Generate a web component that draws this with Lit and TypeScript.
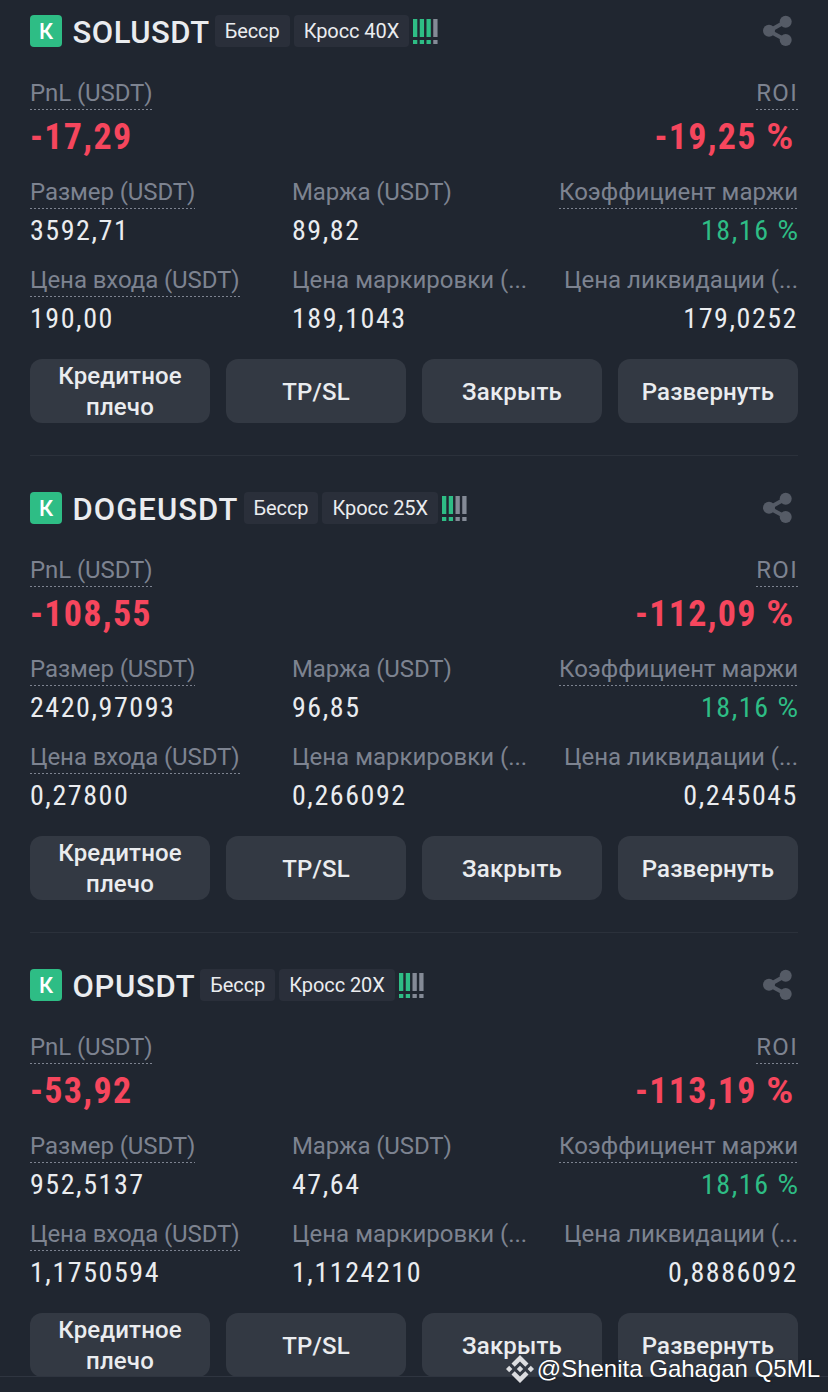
import { LitElement, html, css, svg } from "lit";
import { customElement, property } from "lit/decorators.js";
import { styleMap } from "lit/directives/style-map.js";

interface Position {
  symbol: string;
  tracking: number;
  leverage: string;
  risk: number;
  pnl: string;
  roi: string;
  size: string;
  margin: string;
  ratio: string;
  entry: string;
  mark: string;
  liquidation: string;
}

const POSITIONS: Position[] = [
  { symbol: "SOLUSDT", tracking: 0.5, leverage: "40X", risk: 3, pnl: "-17,29", roi: "-19,25 %", size: "3592,71", margin: "89,82", ratio: "18,16 %", entry: "190,00", mark: "189,1043", liquidation: "179,0252" },
  { symbol: "DOGEUSDT", tracking: 1.04, leverage: "25X", risk: 2, pnl: "-108,55", roi: "-112,09 %", size: "2420,97093", margin: "96,85", ratio: "18,16 %", entry: "0,27800", mark: "0,266092", liquidation: "0,245045" },
  { symbol: "OPUSDT", tracking: 0.69, leverage: "20X", risk: 2, pnl: "-53,92", roi: "-113,19 %", size: "952,5137", margin: "47,64", ratio: "18,16 %", entry: "1,1750594", mark: "1,1124210", liquidation: "0,8886092" },
];

const ACTIONS = ["Кредитное плечо", "TP/SL", "Закрыть", "Развернуть"];

@customElement("position-card")
export class PositionCard extends LitElement {
  @property({ attribute: false }) position!: Position;

  static styles = css`
    :host { display: block; box-sizing: border-box; height: 477.2px; padding: 15px 30px 0; }
    .header { display: flex; align-items: center; height: 32px; }
    .side { width: 32px; height: 32px; border-radius: 4px; background: #2ebd85; color: #fff; font-size: 22px; font-weight: 500; line-height: 34px; text-align: center; }
    .symbol { margin-left: 10.5px; margin-right: 5px; font-size: 31px; font-weight: 500; line-height: 32px; padding-top: 3px; }
    .tag { height: 32px; box-sizing: border-box; padding: 0 10px; margin-right: 4px; border-radius: 4px; background: #2a2f3a; font-size: 20px; line-height: 33px; letter-spacing: -0.08px; white-space: pre; }
    .risk { width: 25px; height: 25px; display: block; }
    .share { margin-left: auto; margin-right: 5px; width: 31px; height: 32px; display: block; }
    .grid { display: grid; grid-template-columns: 262px 240px 1fr; }
    .top { display: flex; justify-content: space-between; margin-top: 31px; }
    .cell { display: flex; flex-direction: column; align-items: flex-start; white-space: nowrap; }
    .end { align-items: flex-end; }
    .label { height: 32px; box-sizing: border-box; color: #7d8390; font-size: 24px; line-height: 30px; }
    .unit { letter-spacing: -0.08px; }
    .wide { letter-spacing: 1.3px; }
    .hint { background: repeating-linear-gradient(90deg, #7d8390 0 2px, transparent 2px 4px) 0 100% / 100% 1px no-repeat; }
    .big { height: 54px; line-height: 54px; color: #f6465d; font-size: 36px; font-weight: 700; font-stretch: 87.5%; letter-spacing: 1.3px; }
    .top .end .big { margin-right: 5px; }
    .value { height: 42px; line-height: 44px; font-size: 28px; font-stretch: 87.5%; letter-spacing: 1.55px; }
    .percent { font-stretch: 100%; letter-spacing: 0; }
    .row { margin-top: 14px; }
    .first { margin-top: 13px; }
    .good { color: #2ebd85; }
    .actions { display: grid; grid-template-columns: repeat(4, 1fr); gap: 16px; margin-top: 20px; }
    .action { display: flex; align-items: center; justify-content: center; height: 64px; padding: 2px 20px 0; border: 0; border-radius: 12px; background: #333943; color: #eaecef; font: 500 24px/31px Roboto, sans-serif; letter-spacing: 0.15px; text-align: center; }
    .rule { height: 1px; margin-top: 32px; background: #2b313b; }
  `;

  private amount(value: string) {
    return value.endsWith("%") ? html`${value.slice(0, -1)}<span class="percent">%</span>` : value;
  }

  private cell(label: string, value: string, hint = false, side = "", tone = "") {
    const unit = label.endsWith("(USDT)") ? "unit" : "";
    return html`<div class="cell ${side}">
      <div class="label ${unit} ${hint ? "hint" : ""}">${label}</div>
      <div class="value ${tone}">${this.amount(value)}</div>
    </div>`;
  }

  render() {
    const p = this.position;
    return html`
      <div class="header">
        <div class="side">К</div>
        <div class="symbol" style=${styleMap({ letterSpacing: `${p.tracking}px` })}>${p.symbol}</div>
        <div class="tag">Бесср</div>
        <div class="tag">Кросс ${p.leverage}</div>
        <svg class="risk" viewBox="0 0 25 25">
          ${[0, 1, 2, 3].map((i) => svg`<path d="M${i * 6.75} 0h4.3v18h-4.3zM${i * 6.75} 21h4.3v4h-4.3z" fill=${i < p.risk ? "#2ebd85" : "#848a96"} />`)}
        </svg>
        <svg class="share" viewBox="0 0 31 32">
          <path d="M23.7 6.5 7 16l16.7 9" fill="none" stroke="#555b66" stroke-width="4" />
          <circle cx="23.7" cy="6.7" r="6" fill="#555b66" />
          <circle cx="7" cy="15.8" r="6" fill="#555b66" />
          <circle cx="23.7" cy="25" r="6" fill="#555b66" />
        </svg>
      </div>
      <div class="top">
        <div class="cell"><div class="label unit hint">PnL (USDT)</div><div class="big">${p.pnl}</div></div>
        <div class="cell end"><div class="label wide hint">ROI</div><div class="big">${this.amount(p.roi)}</div></div>
      </div>
      <div class="grid first">
        ${this.cell("Размер (USDT)", p.size, true)}
        ${this.cell("Маржа (USDT)", p.margin)}
        ${this.cell("Коэффициент маржи", p.ratio, true, "end", "good")}
      </div>
      <div class="grid row">
        ${this.cell("Цена входа (USDT)", p.entry, true)}
        ${this.cell("Цена маркировки (...", p.mark)}
        ${this.cell("Цена ликвидации (...", p.liquidation, false, "end")}
      </div>
      <div class="actions">${ACTIONS.map((a) => html`<button class="action">${a}</button>`)}</div>
      <div class="rule"></div>
    `;
  }
}

@customElement("app-root")
export class AppRoot extends LitElement {
  static styles = css`
    :host { display: block; position: relative; height: 1392px; overflow: hidden; background: #202630; color: #eaecef; font-family: Roboto, sans-serif; }
    .list { height: 1376px; overflow: hidden; }
    .footer { height: 16px; box-sizing: border-box; border-top: 1.5px solid #2f3540; }
    .credit { position: absolute; right: 8px; bottom: 8px; display: flex; align-items: center; gap: 3px; color: #fff; font: 24px/30px "Liberation Sans", sans-serif; white-space: nowrap; text-shadow: 0 0 2px rgba(0, 0, 0, 0.5); }
    .logo { width: 28px; height: 28px; display: block; }
  `;

  render() {
    return html`
      <div class="list">${POSITIONS.map((p) => html`<position-card .position=${p}></position-card>`)}</div>
      <div class="footer"></div>
      <div class="credit">
        <svg class="logo" viewBox="0 0 28 28" fill="#dcdde0">
          <path d="M14 0 22.5 8.5 19.3 11.7 14 6.4 8.7 11.7 5.5 8.5zM14 28 22.5 19.5 19.3 16.3 14 21.6 8.7 16.3 5.5 19.5zM14 10.8 17.2 14 14 17.2 10.8 14zM3.2 10.8 6.4 14 3.2 17.2 0 14zM24.8 10.8 28 14 24.8 17.2 21.6 14z" />
        </svg>
        <span>@Shenita Gahagan Q5ML</span>
      </div>
    `;
  }
}
